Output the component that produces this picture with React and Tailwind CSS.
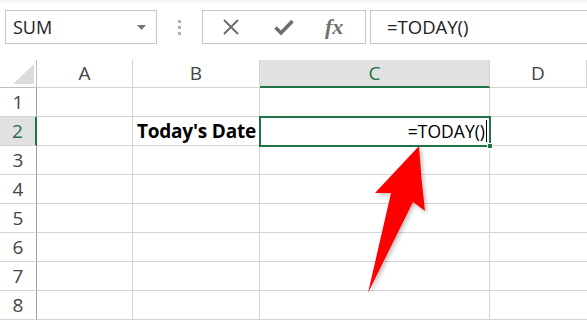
import React from 'react';

const font = { fontFamily: '"Open Sans", "Noto Sans", sans-serif' };

const cols = ['A', 'B', 'C', 'D'];
const rows = [1, 2, 3, 4, 5, 6, 7, 8];

function FormulaBar() {
  return (
    <div className="h-[60px] bg-white relative">
      <div className="h-[4px] bg-gradient-to-b from-[#f0f0f0] to-white" />
      <div className="flex items-center h-[34px] mt-[6px]">
        {/* name box */}
        <div className="ml-[5px] w-[152px] h-[34px] border border-[#c6c6c6] flex items-center justify-between pl-[7px] pr-[10px]">
          <span className="text-[18px] text-[#222]">SUM</span>
          <svg width="9" height="5" viewBox="0 0 9 5">
            <path d="M0 0 L9 0 L4.5 5 Z" fill="#777" />
          </svg>
        </div>
        {/* grip dots */}
        <div className="w-[45px] flex flex-col items-center gap-[3px]">
          <span className="w-[3px] h-[3px] bg-[#b0b0b0]" />
          <span className="w-[3px] h-[3px] bg-[#b0b0b0]" />
          <span className="w-[3px] h-[3px] bg-[#b0b0b0]" />
        </div>
        {/* cancel / enter / fx */}
        <div className="w-[164px] h-[34px] border border-[#c6c6c6] flex items-center">
          <svg className="ml-[19px]" width="18" height="18" viewBox="0 0 18 18">
            <path d="M2 2 L16 16 M16 2 L2 16" stroke="#6e6e6e" strokeWidth="2" />
          </svg>
          <svg className="ml-[34px]" width="20" height="18" viewBox="0 0 20 18">
            <path d="M1.5 9.5 L7 15 L18.5 3" stroke="#6e6e6e" strokeWidth="3.6" fill="none" />
          </svg>
          <span className="ml-[31px] text-[22px] italic font-bold text-[#707070] leading-none" style={{ fontFamily: '"Liberation Serif", serif' }}>
            fx
          </span>
        </div>
        {/* formula input */}
        <div className="ml-[4px] flex-1 h-[34px] border border-[#c6c6c6] border-r-0 flex items-center pl-[16px]">
          <span className="text-[18.5px] text-[#222]">=TODAY()</span>
        </div>
      </div>
    </div>
  );
}

function Sheet() {
  return (
    <div className="grid grid-cols-[37px_96px_127px_230px_1fr] grid-rows-[28px_repeat(8,29px)] relative">
      {/* corner */}
      <div className="border-b border-r border-[#bcbcbc] relative">
        <svg className="absolute left-[13px] top-[4px]" width="21" height="20" viewBox="0 0 21 20">
          <path d="M21 0 L21 20 L0 20 Z" fill="#dcdcdc" />
        </svg>
      </div>
      {cols.map((c) =>
        c === 'C' ? (
          <div key={c} className="bg-[#e1e1e1] border-b-2 border-[#217346] border-r border-r-[#d4d4d4] flex items-center justify-center text-[19px] text-[#217346]">
            {c}
          </div>
        ) : (
          <div key={c} className="border-b border-r border-[#d4d4d4] flex items-center justify-center text-[19px] text-[#444]">
            {c}
          </div>
        )
      )}
      {rows.map((r) => (
        <React.Fragment key={r}>
          {r === 2 ? (
            <div className="bg-[#e1e1e1] border-r-2 border-[#217346] border-b border-b-[#d4d4d4] flex items-center justify-center text-[19px] text-[#217346]">
              {r}
            </div>
          ) : (
            <div className="border-b border-[#d4d4d4] border-r border-r-[#9e9e9e] flex items-center justify-center text-[19px] text-[#444]">
              {r}
            </div>
          )}
          <div className="border-b border-r border-[#d4d4d4]" />
          <div className="border-b border-r border-[#d4d4d4] flex items-center justify-end pr-[3px]">
            {r === 2 && <span className="text-[19px] font-bold text-black tracking-[-0.2px]">Today's Date</span>}
          </div>
          <div className="border-b border-r border-[#d4d4d4] flex items-center justify-end pr-[2px]">
            {r === 2 && (
              <span className="text-[17.5px] text-black flex items-center">
                =TODAY()
                <span className="ml-[1px] w-[1px] h-[22px] bg-black" />
              </span>
            )}
          </div>
          <div className="border-b border-[#d4d4d4]" />
        </React.Fragment>
      ))}
      {/* selected cell frame */}
      <div className="absolute left-[259px] top-[56px] w-[232px] h-[31px] border-2 border-[#217346] pointer-events-none" />
      <div className="absolute left-[487px] top-[83px] w-[6px] h-[6px] bg-[#217346] border border-white" />
    </div>
  );
}

export default function App() {
  return (
    <div className="w-[587px] h-[320px] overflow-hidden bg-white relative" style={font}>
      <FormulaBar />
      <Sheet />
      <svg className="absolute left-0 top-0 pointer-events-none" width="587" height="320" viewBox="0 0 587 320">
        <defs>
          <filter id="sh" x="-20%" y="-20%" width="140%" height="140%">
            <feDropShadow dx="2" dy="2" stdDeviation="2" floodColor="#000" floodOpacity="0.25" />
          </filter>
        </defs>
        <path
          d="M419 146 Q421 178 425 211 L413 202 L368 293 L391 193 L375 193 Z"
          fill="#ff0000"
          filter="url(#sh)"
        />
      </svg>
    </div>
  );
}
